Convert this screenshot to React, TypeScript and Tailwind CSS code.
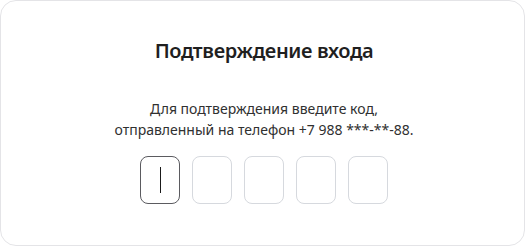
import React from "react";

const digits = ["", "", "", "", ""];

export default function App() {
  return (
    <div className="h-[246px] w-full bg-white" style={{ fontFamily: '"Noto Sans", "Open Sans", sans-serif' }}>
      <div className="flex h-full w-full flex-col items-center rounded-2xl border border-[#e4e4e7] bg-white pt-9 pl-[3px]">
        <h1 className="text-[20px] leading-7 font-semibold tracking-[-0.35px] text-[#1f1f1f]">Подтверждение входа</h1>

        <p className="mt-[33px] text-center text-[14px] leading-[21px] text-[#303030]">
          Для подтверждения введите код,
          <br />
          отправленный на телефон +7 988 ***-**-88.
        </p>

        <div className="mt-4 flex gap-3">
          {digits.map((d, i) => (
            <div
              key={i}
              className={
                i === 0
                  ? "flex h-12 w-10 items-center justify-center rounded-lg border border-[#5b5b60] bg-white"
                  : "flex h-12 w-10 items-center justify-center rounded-lg border border-[#d6d9de] bg-white"
              }
            >
              {i === 0 && <span className="h-[26px] w-px bg-[#1a1a1a]" />}
              {d}
            </div>
          ))}
        </div>
      </div>
    </div>
  );
}
